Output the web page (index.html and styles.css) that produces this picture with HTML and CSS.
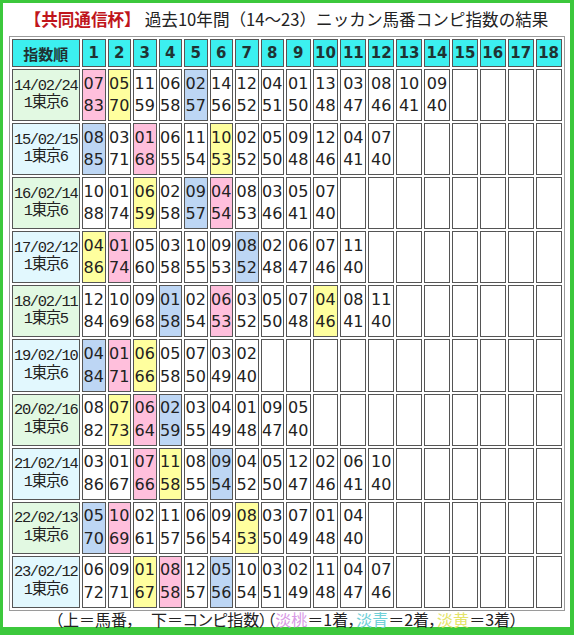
FILE: index.html
```html
<!DOCTYPE html>
<html lang="ja">
<head>
<meta charset="utf-8">
<title>共同通信杯 コンピ指数</title>
<link rel="stylesheet" href="styles.css">
</head>
<body>
<div class="frame">
  <h1 class="title"><span class="race">【共同通信杯】</span>過去10年間（14〜23）ニッカン馬番コンピ指数の結果</h1>
  <div class="grid">
    <div class="hd hd-label">指数順</div>
    <div class="hd">1</div><div class="hd">2</div><div class="hd">3</div><div class="hd">4</div><div class="hd">5</div><div class="hd">6</div><div class="hd">7</div><div class="hd">8</div><div class="hd">9</div><div class="hd">10</div><div class="hd">11</div><div class="hd">12</div><div class="hd">13</div><div class="hd">14</div><div class="hd">15</div><div class="hd">16</div><div class="hd">17</div><div class="hd">18</div>

    <div class="dt g"><span>14/02/24</span><span>1東京6</span></div>
    <div class="c p">07<br>83</div><div class="c y">05<br>70</div><div class="c">11<br>59</div><div class="c">06<br>58</div><div class="c b">02<br>57</div><div class="c">14<br>56</div><div class="c">12<br>52</div><div class="c">04<br>51</div><div class="c">01<br>50</div><div class="c">13<br>48</div><div class="c">03<br>47</div><div class="c">08<br>46</div><div class="c">10<br>41</div><div class="c">09<br>40</div><div class="c"></div><div class="c"></div><div class="c"></div><div class="c"></div>

    <div class="dt s"><span>15/02/15</span><span>1東京6</span></div>
    <div class="c b">08<br>85</div><div class="c">03<br>71</div><div class="c p">01<br>68</div><div class="c">06<br>55</div><div class="c">11<br>54</div><div class="c y">10<br>53</div><div class="c">02<br>52</div><div class="c">05<br>50</div><div class="c">09<br>48</div><div class="c">12<br>46</div><div class="c">04<br>41</div><div class="c">07<br>40</div><div class="c"></div><div class="c"></div><div class="c"></div><div class="c"></div><div class="c"></div><div class="c"></div>

    <div class="dt g"><span>16/02/14</span><span>1東京6</span></div>
    <div class="c">10<br>88</div><div class="c">01<br>74</div><div class="c y">06<br>59</div><div class="c">02<br>58</div><div class="c b">09<br>57</div><div class="c p">04<br>54</div><div class="c">08<br>53</div><div class="c">03<br>46</div><div class="c">05<br>41</div><div class="c">07<br>40</div><div class="c"></div><div class="c"></div><div class="c"></div><div class="c"></div><div class="c"></div><div class="c"></div><div class="c"></div><div class="c"></div>

    <div class="dt s"><span>17/02/12</span><span>1東京6</span></div>
    <div class="c y">04<br>86</div><div class="c p">01<br>74</div><div class="c">05<br>60</div><div class="c">03<br>58</div><div class="c">10<br>55</div><div class="c">09<br>53</div><div class="c b">08<br>52</div><div class="c">02<br>48</div><div class="c">06<br>47</div><div class="c">07<br>46</div><div class="c">11<br>40</div><div class="c"></div><div class="c"></div><div class="c"></div><div class="c"></div><div class="c"></div><div class="c"></div><div class="c"></div>

    <div class="dt g"><span>18/02/11</span><span>1東京5</span></div>
    <div class="c">12<br>84</div><div class="c">10<br>69</div><div class="c">09<br>68</div><div class="c b">01<br>58</div><div class="c">02<br>54</div><div class="c p">06<br>53</div><div class="c">03<br>52</div><div class="c">05<br>50</div><div class="c">07<br>48</div><div class="c y">04<br>46</div><div class="c">08<br>41</div><div class="c">11<br>40</div><div class="c"></div><div class="c"></div><div class="c"></div><div class="c"></div><div class="c"></div><div class="c"></div>

    <div class="dt s"><span>19/02/10</span><span>1東京6</span></div>
    <div class="c b">04<br>84</div><div class="c p">01<br>71</div><div class="c y">06<br>66</div><div class="c">05<br>58</div><div class="c">07<br>50</div><div class="c">03<br>49</div><div class="c">02<br>40</div><div class="c"></div><div class="c"></div><div class="c"></div><div class="c"></div><div class="c"></div><div class="c"></div><div class="c"></div><div class="c"></div><div class="c"></div><div class="c"></div><div class="c"></div>

    <div class="dt g"><span>20/02/16</span><span>1東京6</span></div>
    <div class="c">08<br>82</div><div class="c y">07<br>73</div><div class="c p">06<br>64</div><div class="c b">02<br>59</div><div class="c">03<br>55</div><div class="c">04<br>49</div><div class="c">01<br>48</div><div class="c">09<br>47</div><div class="c">05<br>40</div><div class="c"></div><div class="c"></div><div class="c"></div><div class="c"></div><div class="c"></div><div class="c"></div><div class="c"></div><div class="c"></div><div class="c"></div>

    <div class="dt s"><span>21/02/14</span><span>1東京6</span></div>
    <div class="c">03<br>86</div><div class="c">01<br>67</div><div class="c p">07<br>66</div><div class="c y">11<br>58</div><div class="c">08<br>55</div><div class="c b">09<br>54</div><div class="c">04<br>52</div><div class="c">05<br>50</div><div class="c">12<br>47</div><div class="c">02<br>46</div><div class="c">06<br>41</div><div class="c">10<br>40</div><div class="c"></div><div class="c"></div><div class="c"></div><div class="c"></div><div class="c"></div><div class="c"></div>

    <div class="dt g"><span>22/02/13</span><span>1東京6</span></div>
    <div class="c b">05<br>70</div><div class="c p">10<br>69</div><div class="c">02<br>61</div><div class="c">11<br>57</div><div class="c">06<br>56</div><div class="c">09<br>54</div><div class="c y">08<br>53</div><div class="c">03<br>50</div><div class="c">07<br>49</div><div class="c">01<br>48</div><div class="c">04<br>40</div><div class="c"></div><div class="c"></div><div class="c"></div><div class="c"></div><div class="c"></div><div class="c"></div><div class="c"></div>

    <div class="dt s"><span>23/02/12</span><span>1東京6</span></div>
    <div class="c">06<br>72</div><div class="c">09<br>71</div><div class="c y">01<br>67</div><div class="c p">08<br>58</div><div class="c">12<br>57</div><div class="c b">05<br>56</div><div class="c">10<br>54</div><div class="c">03<br>51</div><div class="c">02<br>49</div><div class="c">11<br>48</div><div class="c">04<br>47</div><div class="c">07<br>46</div><div class="c"></div><div class="c"></div><div class="c"></div><div class="c"></div><div class="c"></div><div class="c"></div>
  </div>
  <p class="note">（上＝馬番，　下＝コンピ指数）（<span class="k-p">淡桃</span>＝1着，<span class="k-b">淡青</span>＝2着，<span class="k-y">淡黄</span>＝3着）</p>
</div>
</body>
</html>
```
FILE: styles.css
```css
html, body {
  margin: 0;
  padding: 0;
  background: #ffffff;
}

.frame {
  box-sizing: border-box;
  width: 574px;
  height: 635px;
  border-style: solid;
  border-color: #3cc83c;
  border-width: 3px 4px 8px 3px;
  background: #ffffff;
  display: flex;
  flex-direction: column;
  align-items: center;
}

.title {
  margin: 0;
  height: 33px;
  line-height: 33px;
  font-family: "Noto Sans CJK JP", sans-serif;
  font-size: 16.6px;
  font-weight: normal;
  color: #222222;
  white-space: nowrap;
}

.race {
  color: #c0161c;
  font-weight: bold;
  margin-right: 4px;
}

.grid {
  box-sizing: border-box;
  width: 556px;
  display: grid;
  grid-template-columns: 68.5px repeat(8, 23.5px) 24.5px repeat(9, 25.9px);
  grid-template-rows: 28px;
  grid-auto-rows: 52.1px;
  gap: 2px;
  padding: 2px;
  border: 1px solid #9a9a9a;
  background: #ffffff;
}

.hd {
  box-sizing: border-box;
  border: 1px solid #555555;
  background: #3cf0f0;
  color: #1f3333;
  font-family: "DejaVu Sans", sans-serif;
  font-weight: bold;
  font-size: 15px;
  display: flex;
  align-items: center;
  justify-content: center;
}

.hd-label {
  font-family: "Noto Sans CJK JP", sans-serif;
}

.dt {
  box-sizing: border-box;
  border: 1px solid #555555;
  display: flex;
  flex-direction: column;
  align-items: center;
  justify-content: center;
  font-family: "Liberation Mono", "Noto Sans CJK JP", monospace;
  font-size: 15.4px;
  letter-spacing: -1.3px;
  color: #222222;
}

.dt span {
  display: block;
  height: 17.5px;
  line-height: 17.5px;
}

.dt.g { background: #e2f9e2; }
.dt.s { background: #e2f8fe; }

.c {
  box-sizing: border-box;
  border: 1px solid #555555;
  background: #ffffff;
  font-family: "DejaVu Sans", sans-serif;
  font-size: 16px;
  line-height: 22.5px;
  color: #222222;
  display: flex;
  align-items: center;
  justify-content: center;
  text-align: center;
}

.c.p { background: #ffbfdc; }
.c.b { background: #bdd6f4; }
.c.y { background: #ffff9e; }

.note {
  margin: 0;
  height: 16px;
  line-height: 16px;
  font-family: "Noto Sans CJK JP", sans-serif;
  font-feature-settings: "palt";
  font-size: 16px;
  color: #222222;
  white-space: nowrap;
}

.k-p { color: #d99ae6; }
.k-b { color: #6fd0d8; }
.k-y { color: #e4e46a; }
```
